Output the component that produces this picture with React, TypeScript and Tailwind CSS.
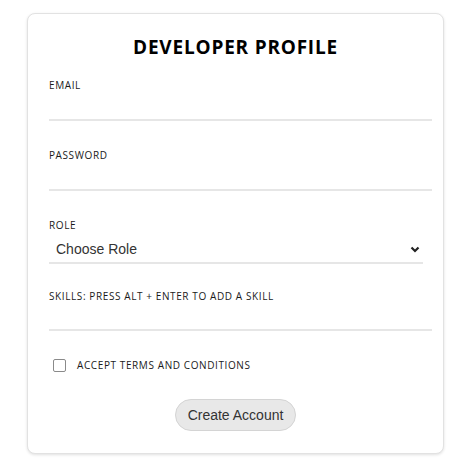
import React from "react";

export default function App() {
  const label =
    "block text-[10px] leading-[14px] tracking-[0.6px] font-medium text-[#1a1a1a] font-['Open_Sans',sans-serif]";
  return (
    <div className="w-[474px] h-[474px] bg-white pt-[13px] pl-[27px]">
      <div className="w-[417px] h-[441px] rounded-[8px] border border-[#e2e2e2] shadow-[0_1px_3px_rgba(0,0,0,0.12)] bg-white pl-[21px] pr-[11px] pt-[22px]">
        <h1 className="text-center text-[19px] leading-[22px] font-bold tracking-[0.8px] text-black font-['Open_Sans',sans-serif] pr-[10px]">
          DEVELOPER PROFILE
        </h1>
        <div className="mt-[20px]">
          <label className={label}>EMAIL</label>
          <div className="h-[29px] border-b-2 border-[#e6e6e6]" />
        </div>
        <div className="mt-[27px]">
          <label className={label}>PASSWORD</label>
          <div className="h-[29px] border-b-2 border-[#e6e6e6]" />
        </div>
        <div className="mt-[27px]">
          <label className={label}>ROLE</label>
          <div className="mr-[9px] h-[27px] border-b-2 border-[#e6e6e6] flex items-center justify-between pl-[7px] pr-[3px] mt-[5px]">
            <span className="text-[14px] text-[#333] font-['Liberation_Sans',Arial,sans-serif]">
              Choose Role
            </span>
            <svg width="10" height="7" viewBox="0 0 10 7">
              <path d="M1.5 1.5 L5 5 L8.5 1.5" stroke="#222" strokeWidth="2.2" fill="none" />
            </svg>
          </div>
        </div>
        <div className="mt-[25px]">
          <label className={label}>SKILLS: PRESS ALT + ENTER TO ADD A SKILL</label>
          <div className="h-[28px] border-b-2 border-[#e6e6e6]" />
        </div>
        <div className="mt-[27px] flex items-center pl-[4px]">
          <div className="w-[13px] h-[13px] border border-[#8a8a8a] rounded-[2px]" />
          <span className="ml-[11px] text-[10px] leading-[14px] tracking-[0.6px] font-medium text-[#1a1a1a] font-['Open_Sans',sans-serif]">
            ACCEPT TERMS AND CONDITIONS
          </span>
        </div>
        <div className="mt-[27px] flex justify-center pr-[10px]">
          <button className="w-[121px] h-[32px] rounded-full bg-[#e8e8e8] border border-[#d4d4d4] text-[14px] text-[#333] font-['Liberation_Sans',Arial,sans-serif]">
            Create Account
          </button>
        </div>
      </div>
    </div>
  );
}
